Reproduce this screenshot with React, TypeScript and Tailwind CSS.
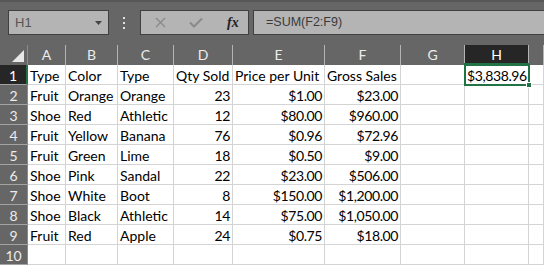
import React from "react";

type Row = { n: number; cells: string[] };

const rows: Row[] = [
  { n: 1, cells: ["Type", "Color", "Type", "Qty Sold", "Price per Unit", "Gross Sales", "", "$3,838.96"] },
  { n: 2, cells: ["Fruit", "Orange", "Orange", "23", "$1.00", "$23.00", "", ""] },
  { n: 3, cells: ["Shoe", "Red", "Athletic", "12", "$80.00", "$960.00", "", ""] },
  { n: 4, cells: ["Fruit", "Yellow", "Banana", "76", "$0.96", "$72.96", "", ""] },
  { n: 5, cells: ["Fruit", "Green", "Lime", "18", "$0.50", "$9.00", "", ""] },
  { n: 6, cells: ["Shoe", "Pink", "Sandal", "22", "$23.00", "$506.00", "", ""] },
  { n: 7, cells: ["Shoe", "White", "Boot", "8", "$150.00", "$1,200.00", "", ""] },
  { n: 8, cells: ["Shoe", "Black", "Athletic", "14", "$75.00", "$1,050.00", "", ""] },
  { n: 9, cells: ["Fruit", "Red", "Apple", "24", "$0.75", "$18.00", "", ""] },
  { n: 10, cells: ["", "", "", "", "", "", "", ""] },
];

const letters = ["A", "B", "C", "D", "E", "F", "G", "H", ""];

function ColHeader({ label, active }: { label: string; active?: boolean }) {
  return (
    <div
      className={`relative h-[20px] border-r border-[#b4b4b4] text-center text-[14px] leading-[20px] ${
        active ? "bg-[#262626] text-white" : "bg-[#666666] text-[#ececec]"
      }`}
    >
      {label}
      {active && <div className="absolute left-[-1px] right-[-1px] bottom-0 h-[2px] bg-[#217346]" />}
    </div>
  );
}

function RowHeader({ n, active }: { n: number; active?: boolean }) {
  return (
    <div
      className={`h-[20px] border-b border-[#a3a3a3] pt-[2px] text-center text-[14px] leading-[18px] ${
        active ? "bg-[#262626] text-white border-r-2 border-r-[#217346]" : "bg-[#666666] text-[#ececec] border-r border-r-[#8a8a8a]"
      }`}
    >
      {n}
    </div>
  );
}

function Cell({ text, right, selected }: { text: string; right?: boolean; selected?: boolean }) {
  return (
    <div
      className={`relative h-[20px] overflow-visible whitespace-nowrap border-b border-r border-[#d4d4d4] bg-white px-[2px] pt-[2px] text-[14px] leading-[18px] text-black ${
        right ? "text-right tracking-[-0.4px]" : "text-left"
      }`}
    >
      {text}
      {selected && (
        <>
          <div className="pointer-events-none absolute left-[-1px] top-[-1px] z-10 h-[22px] w-[66px] border-2 border-[#217346]" />
          <div className="absolute left-[61px] top-[17px] z-20 h-[6px] w-[6px] border border-white bg-[#217346]" />
        </>
      )}
    </div>
  );
}

export default function App() {
  return (
    <div className="h-[265px] w-[544px] overflow-hidden bg-[#666666] font-['Lato','Liberation_Sans',sans-serif]">
      {/* formula bar area */}
      <div className="h-[45px] border-t-2 border-[#575757] pt-[8px]">
        <div className="flex h-[25px] items-stretch">
          <div className="ml-[8px] flex w-[101px] items-center justify-between border border-[#404040] bg-[#b4b4b4] pl-[6px] pr-[6px]">
            <span className="font-['Liberation_Sans',sans-serif] text-[13px] text-[#555555]">H1</span>
            <svg width="7" height="4" viewBox="0 0 7 4">
              <polygon points="0,0 7,0 3.5,4" fill="#444444" />
            </svg>
          </div>
          <div className="flex w-[31px] flex-col items-center justify-center gap-[3px] pr-[1px]">
            <div className="h-[2px] w-[2px] bg-[#e0e0e0]" />
            <div className="h-[2px] w-[2px] bg-[#e0e0e0]" />
            <div className="h-[2px] w-[2px] bg-[#e0e0e0]" />
          </div>
          <div className="flex w-[109px] items-center border border-[#404040] bg-[#b4b4b4]">
            <div className="ml-[13px] flex w-[12px] justify-center">
              <svg width="11" height="11" viewBox="0 0 11 11">
                <path d="M1 1 L10 10 M10 1 L1 10" stroke="#8a8a8a" strokeWidth="1.4" fill="none" />
              </svg>
            </div>
            <div className="ml-[23px] flex w-[14px] justify-center">
              <svg width="14" height="11" viewBox="0 0 14 11">
                <path d="M1 5.5 L5 9.5 L13 1.5" stroke="#8a8a8a" strokeWidth="2" fill="none" />
              </svg>
            </div>
            <span className="ml-[24px] font-['Liberation_Serif',serif] text-[14px] font-bold italic leading-none text-[#222222]">
              fx
            </span>
          </div>
          <div className="ml-[4px] flex flex-1 items-center border border-r-0 border-[#404040] bg-[#b4b4b4] pl-[12px]">
            <span className="font-['Liberation_Sans',sans-serif] text-[12.5px] text-[#3a3a3a]">=SUM(F2:F9)</span>
          </div>
        </div>
      </div>

      {/* sheet grid */}
      <div className="grid grid-cols-[28px_38px_52px_56px_59px_92px_76px_64px_64px_1fr]">
        <div className="flex h-[20px] items-end justify-end border-r border-[#8a8a8a] bg-[#666666] pb-[3px] pr-[3px]">
          <svg width="12" height="12" viewBox="0 0 12 12">
            <polygon points="12,0 12,12 0,12" fill="#e8e8e8" />
          </svg>
        </div>
        {letters.map((l, i) => (
          <ColHeader key={i} label={l} active={l === "H"} />
        ))}
        {rows.map((r) => (
          <React.Fragment key={r.n}>
            <RowHeader n={r.n} active={r.n === 1} />
            {r.cells.map((c, i) => (
              <Cell
                key={i}
                text={c}
                right={(r.n > 1 && i >= 3 && i <= 5) || (r.n === 1 && i === 7)}
                selected={r.n === 1 && i === 7}
              />
            ))}
            <Cell text="" />
          </React.Fragment>
        ))}
      </div>
    </div>
  );
}
